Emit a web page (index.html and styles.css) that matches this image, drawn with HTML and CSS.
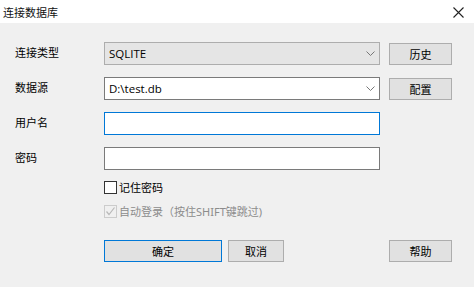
FILE: index.html
```html
<!DOCTYPE html>
<html lang="zh-CN">
<head>
    <meta charset="UTF-8">
    <title>连接数据库</title>
    <link rel="stylesheet" href="styles.css">
</head>
<body>
    <div class="window">
        <!-- Title bar -->
        <div class="titlebar">
            <span class="title">连接数据库</span>
            <svg class="close" width="11" height="11" viewBox="0 0 11 11">
                <path d="M0.5 0.5 L10.5 10.5 M10.5 0.5 L0.5 10.5" stroke="#222" stroke-width="1.1" fill="none"/>
            </svg>
        </div>

        <!-- Dialog body -->
        <div class="content">
            <div class="form-row">
                <label>连接类型</label>
                <div class="combo readonly">
                    <span class="value">SQLITE</span>
                    <svg class="arrow" width="9" height="5" viewBox="0 0 9 5"><path d="M0.5 0.5 L4.5 4.5 L8.5 0.5" stroke="#777" fill="none"/></svg>
                </div>
                <button class="btn side">历史</button>
            </div>

            <div class="form-row">
                <label>数据源</label>
                <div class="combo">
                    <span class="value">D:\test.db</span>
                    <svg class="arrow" width="9" height="5" viewBox="0 0 9 5"><path d="M0.5 0.5 L4.5 4.5 L8.5 0.5" stroke="#777" fill="none"/></svg>
                </div>
                <button class="btn side">配置</button>
            </div>

            <div class="form-row">
                <label>用户名</label>
                <div class="textbox focused"></div>
            </div>

            <div class="form-row">
                <label>密码</label>
                <div class="textbox"></div>
            </div>

            <div class="check-row first">
                <span class="checkbox"></span>
                <span>记住密码</span>
            </div>

            <div class="check-row disabled">
                <span class="checkbox">
                    <svg width="11" height="11" viewBox="0 0 11 11"><path d="M1.5 5.5 L4 8.5 L9.5 1.5" stroke="#b8b8b8" stroke-width="1.2" fill="none"/></svg>
                </span>
                <span>自动登录（按住SHIFT键跳过)</span>
            </div>

            <div class="actions">
                <button class="btn ok">确定</button>
                <button class="btn cancel">取消</button>
                <button class="btn side help">帮助</button>
            </div>
        </div>
    </div>
</body>
</html>
```

FILE: styles.css
```css
body {
    margin: 0;
    font-family: "Noto Sans", "Noto Sans CJK SC", sans-serif;
    font-size: 11px;
    color: #000;
    background-color: #F0F0F0;
}

.window {
    width: 474px;
    height: 287px;
    background-color: #F0F0F0;
    display: flex;
    flex-direction: column;
}

/* Title bar */
.titlebar {
    height: 23px;
    background-color: white;
    display: flex;
    align-items: center;
    justify-content: space-between;
    padding: 0 10px 0 3px;
    flex-shrink: 0;
}

.titlebar .title {
    font-size: 11px;
    color: #111;
}

.close {
    margin-top: 1px;
}

/* Body */
.content {
    padding: 19px 0 0 15px;
    display: flex;
    flex-direction: column;
}

.form-row {
    display: flex;
    align-items: center;
    height: 23px;
    margin-bottom: 12px;
}

.form-row label {
    width: 89px;
    flex-shrink: 0;
    margin-top: -4px;
}

.combo, .textbox {
    width: 276px;
    height: 23px;
    box-sizing: border-box;
    border: 1px solid #7A7A7A;
    background-color: white;
}

.combo {
    display: flex;
    align-items: center;
    justify-content: space-between;
    padding: 0 4px 0 4px;
}

.combo.readonly {
    background-color: #E5E5E5;
    border-color: #ADADAD;
}

.combo .value {
    font-family: "Open Sans", "Noto Sans", sans-serif;
    font-size: 11.5px;
}

.textbox.focused {
    border-color: #0078D7;
}

.btn {
    height: 22px;
    box-sizing: border-box;
    border: 1px solid #ADADAD;
    background-color: #E1E1E1;
    font-family: "Noto Sans CJK SC", sans-serif;
    font-size: 11px;
    color: #000;
    padding: 0;
    cursor: pointer;
}

.btn.side {
    width: 63px;
    margin-left: 9px;
}

/* Check boxes */
.check-row {
    display: flex;
    align-items: center;
    height: 14px;
    margin-left: 89px;
    margin-bottom: 10px;
}

.check-row.first {
    margin-top: -2px;
}

.checkbox {
    width: 13px;
    height: 13px;
    box-sizing: border-box;
    border: 1px solid #333;
    background-color: white;
    margin-right: 2px;
    display: flex;
    align-items: center;
    justify-content: center;
}

.check-row.disabled {
    color: #8C8C8C;
}

.check-row.disabled .checkbox {
    border-color: #CCCCCC;
    background-color: #F0F0F0;
}

/* Buttons */
.actions {
    display: flex;
    margin-left: 89px;
    margin-top: 12px;
    width: 348px;
}

.btn.ok {
    width: 118px;
    border-color: #0078D7;
}

.btn.cancel {
    width: 56px;
    margin-left: 6px;
}

.btn.help {
    margin-left: auto;
}
```
